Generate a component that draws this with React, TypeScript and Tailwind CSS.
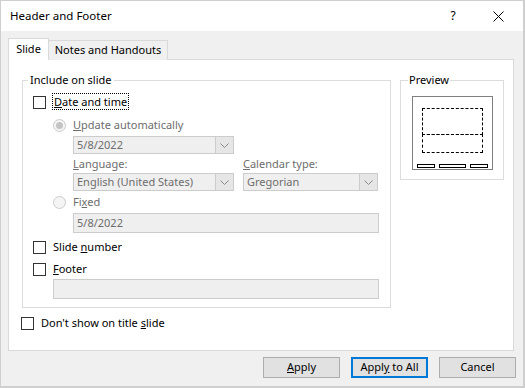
import React from "react";

const font = { fontFamily: '"Noto Sans", "Open Sans", sans-serif' };

function Check({ children, className = "" }: { children: React.ReactNode; className?: string }) {
  return (
    <div className={"flex items-center h-[14px] " + className}>
      <div className="w-[13px] h-[13px] border border-[#333333] bg-white shrink-0" />
      <div className="ml-[7px] leading-[14px]">{children}</div>
    </div>
  );
}

function Radio({ on, children, className = "" }: { on?: boolean; children: React.ReactNode; className?: string }) {
  return (
    <div className={"flex items-center h-[14px] text-[#6d6d6d] " + className}>
      <div className="w-[13px] h-[13px] rounded-full border border-[#cccccc] bg-[#f4f4f4] shrink-0 flex items-center justify-center">
        {on && <div className="w-[7px] h-[7px] rounded-full bg-[#c4c4c4]" />}
      </div>
      <div className="ml-[7px] leading-[14px]">{children}</div>
    </div>
  );
}

function Chevron() {
  return (
    <svg width="9" height="5" viewBox="0 0 9 5">
      <polyline points="0.5,0.5 4.5,4.5 8.5,0.5" fill="none" stroke="#8a8a8a" strokeWidth="1" />
    </svg>
  );
}

function Combo({ value, w }: { value: string; w: string }) {
  return (
    <div className={"flex h-[18px] border border-[#cccccc] bg-[#efefef] " + w}>
      <div className="flex-1 pl-[3px] leading-[16px] text-[#6d6d6d]">{value}</div>
      <div className="w-[18px] border-l border-[#cccccc] bg-[#e6e6e6] flex items-center justify-center">
        <Chevron />
      </div>
    </div>
  );
}

function Button({ children, primary }: { children: React.ReactNode; primary?: boolean }) {
  return (
    <div
      className={
        "w-[77px] h-[21px] bg-[#e1e1e1] flex items-center justify-center " +
        (primary ? "border-2 border-[#0078d7]" : "border border-[#adadad]")
      }
    >
      <span>{children}</span>
    </div>
  );
}

export default function App() {
  return (
    <div
      className="w-[525px] h-[388px] bg-[#f0f0f0] border border-[#cfcfcf] border-b-[2px] border-r-[2px] text-[11px] text-black flex flex-col overflow-hidden"
      style={font}
    >
      {/* Title bar */}
      <div className="h-[30px] bg-white flex items-center shrink-0">
        <div className="pl-[9px] flex-1 text-[11.5px]">Header and Footer</div>
        <div className="w-[10px] text-center text-[12px] mr-[35px]">?</div>
        <svg width="11" height="11" viewBox="0 0 11 11" className="mr-[19px]">
          <path d="M0.5 0.5 L10.5 10.5 M10.5 0.5 L0.5 10.5" stroke="#000" strokeWidth="1" />
        </svg>
      </div>

      {/* Body */}
      <div className="flex-1 pl-[7px] pr-[9px] pt-[7px] flex flex-col">
        {/* Tabs */}
        <div className="flex items-end h-[22px] relative z-10">
          <div className="h-[22px] w-[41px] bg-white border border-[#d9d9d9] border-b-0 flex items-center justify-center">
            Slide
          </div>
          <div className="h-[20px] w-[119px] bg-[#f0f0f0] border border-[#d9d9d9] border-l-0 border-b-0 flex items-center justify-center">
            Notes and Handouts
          </div>
        </div>
        {/* Panel */}
        <div className="h-[292px] bg-white border border-[#d9d9d9] -mt-[1px] flex flex-col pl-[13px] pt-[12px]">
          <div className="flex gap-[9px]">
            <fieldset className="w-[369px] h-[236px] border border-[#dcdcdc] pl-[10px]">
              <legend className="px-[2px] ml-[-5px] leading-[16px]">Include on slide</legend>
              <Check className="mt-[7px]">
                <span className="outline outline-1 outline-dotted outline-black px-[1px]"><u>D</u>ate and time</span>
              </Check>
              <div className="pl-[20px]">
                <Radio on className="mt-[9px]"><u>U</u>pdate automatically</Radio>
                <div className="pl-[20px]">
                  <Combo value="5/8/2022" w="w-[161px] mt-[4px]" />
                  <div className="flex gap-[9px] mt-[2px]">
                    <div>
                      <div className="leading-[16px] text-[#6d6d6d]"><u>L</u>anguage:</div>
                      <Combo value="English (United States)" w="w-[161px] mt-[1px]" />
                    </div>
                    <div>
                      <div className="leading-[16px] text-[#6d6d6d]"><u>C</u>alendar type:</div>
                      <Combo value="Gregorian" w="w-[135px] mt-[1px]" />
                    </div>
                  </div>
                </div>
                <Radio className="mt-[4px]">Fi<u>x</u>ed</Radio>
                <div className="pl-[20px] mt-[4px]">
                  <div className="w-[306px] h-[20px] border border-[#cccccc] bg-[#efefef] pl-[3px] leading-[18px] text-[#6d6d6d]">5/8/2022</div>
                </div>
              </div>
              <Check className="mt-[7px]">Slide <u>n</u>umber</Check>
              <Check className="mt-[8px]"><u>F</u>ooter</Check>
              <div className="pl-[20px] mt-[3px]">
                <div className="w-[326px] h-[20px] border border-[#cccccc] bg-[#efefef]" />
              </div>
            </fieldset>
            <fieldset className="w-[104px] h-[108px] border border-[#dcdcdc] pl-[11px]">
              <legend className="px-[1px] ml-[-4px] leading-[16px]">Preview</legend>
              <div className="mt-[8px] w-[81px] h-[74px] border border-[#7f7f7f] bg-white flex flex-col items-center">
                <div className="mt-[11px] w-[61px] h-[27px] border border-dashed border-black" />
                <div className="-mt-[1px] w-[61px] h-[19px] border border-dashed border-black" />
                <div className="mt-auto mb-[1px] flex gap-[4px]">
                  <div className="w-[18px] h-[4px] border border-black" />
                  <div className="w-[27px] h-[4px] border border-black" />
                  <div className="w-[18px] h-[4px] border border-black" />
                </div>
              </div>
            </fieldset>
          </div>
          <Check className="mt-[8px] -ml-[1px]">Don't show on title <u>s</u>lide</Check>
        </div>
        {/* Buttons */}
        <div className="flex justify-end gap-[11px] mt-[6px] mr-[-2px]">
          <Button><u>A</u>pply</Button>
          <Button primary>Appl<u>y</u> to All</Button>
          <Button>Cancel</Button>
        </div>
      </div>
    </div>
  );
}
